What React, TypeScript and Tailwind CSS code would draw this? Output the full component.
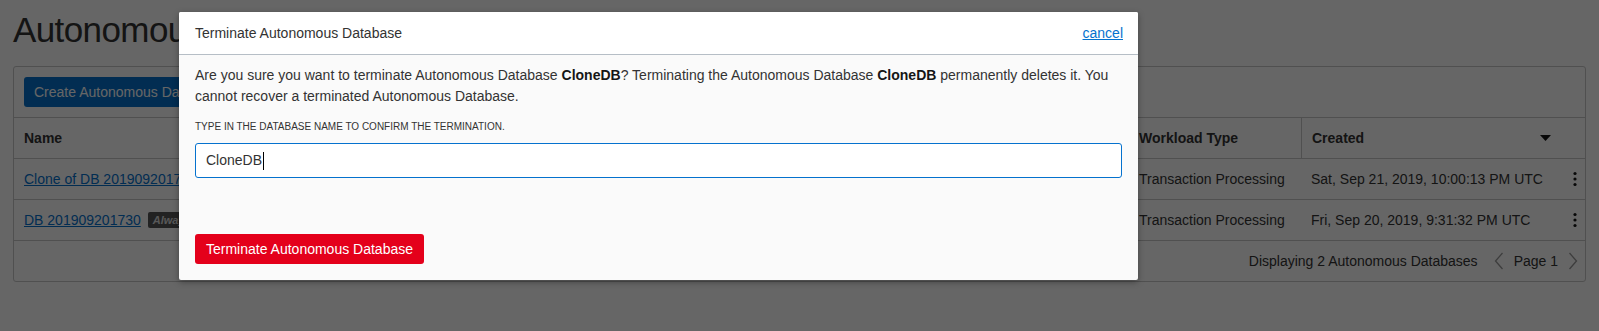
const rows = [
  {
    name: 'Clone of DB 201909201730',
    free: false,
    workload: 'Transaction Processing',
    created: 'Sat, Sep 21, 2019, 10:00:13 PM UTC',
  },
  {
    name: 'DB 201909201730',
    free: true,
    workload: 'Transaction Processing',
    created: 'Fri, Sep 20, 2019, 9:31:32 PM UTC',
  },
];

function Kebab() {
  return (
    <svg width="4" height="16" viewBox="0 0 4 16" className="fill-[#161616]">
      <circle cx="2" cy="2.5" r="1.6" />
      <circle cx="2" cy="8" r="1.6" />
      <circle cx="2" cy="13.5" r="1.6" />
    </svg>
  );
}

function Chevron({ dir }: { dir: 'left' | 'right' }) {
  return (
    <svg width="10" height="18" viewBox="0 0 10 18" fill="none" className="stroke-[#9a9a9a]">
      {dir === 'left' ? <path d="M8.5 1 L1.5 9 L8.5 17" strokeWidth="1.3" /> : <path d="M1.5 1 L8.5 9 L1.5 17" strokeWidth="1.3" />}
    </svg>
  );
}

export default function App() {
  return (
    <div className="relative h-[331px] w-full overflow-hidden bg-white font-['Liberation_Sans',Arial,sans-serif] text-[14px] text-[#333]">
      {/* page behind the dialog */}
      <div className="px-[13px] pt-[8px]">
        <h1 className="text-[35px] leading-[44px] tracking-[-0.6px] text-[#333]">Autonomous Databases</h1>

        <div className="mt-[14px] rounded-[3px] border border-[#c8c8c8]">
          <div className="border-b border-[#c8c8c8] px-[10px] py-[10px]">
            <button className="h-[30px] rounded-[3px] bg-[#0572ce] px-[10px] text-[14px] text-white">
              Create Autonomous Database
            </button>
          </div>

          <div className="grid h-[41px] grid-cols-[1fr_172px_264px_20px] items-center border-b border-[#c8c8c8] font-bold text-[#333]">
            <div className="pl-[10px]">Name</div>
            <div className="pl-[10px]">Workload Type</div>
            <div className="col-span-2 flex h-full items-center justify-between border-l border-[#c8c8c8] pl-[10px] pr-[34px]">
              <span>Created</span>
              <svg width="11" height="6" viewBox="0 0 11 6" className="fill-[#161616]">
                <path d="M0 0 H11 L5.5 6 Z" />
              </svg>
            </div>
          </div>

          {rows.map((r) => (
            <div
              key={r.name}
              className="grid h-[41px] grid-cols-[1fr_172px_264px_20px] items-center border-b border-[#c8c8c8]"
            >
              <div className="flex items-center gap-[7px] pl-[10px]">
                <a className="text-[#0572ce] underline">{r.name}</a>
                {r.free && (
                  <span className="rounded-[2px] bg-[#555] px-[5px] text-[11px] leading-[16px] font-bold italic text-[#ddd]">
                    Always Free
                  </span>
                )}
              </div>
              <div className="pl-[10px] whitespace-nowrap">{r.workload}</div>
              <div className="pl-[10px] whitespace-nowrap">{r.created}</div>
              <div className="flex justify-center">
                <Kebab />
              </div>
            </div>
          ))}

          <div className="flex h-[40px] items-center justify-end gap-[16px] pr-[7px]">
            <span>Displaying 2 Autonomous Databases</span>
            <div className="flex items-center gap-[10px]">
              <Chevron dir="left" />
              <span>Page 1</span>
              <Chevron dir="right" />
            </div>
          </div>
        </div>
      </div>

      {/* dim overlay */}
      <div className="absolute inset-0 bg-black/60" />

      {/* terminate dialog */}
      <div className="absolute left-[179px] top-[12px] w-[959px] overflow-hidden rounded-[2px] bg-[#fafafa] shadow-[0_2px_6px_rgba(0,0,0,0.35)]">
        <div className="flex h-[43px] items-center justify-between border-b border-[#b6bec6] bg-white pl-[16px] pr-[15px]">
          <span className="text-[#333]">Terminate Autonomous Database</span>
          <a className="text-[#0572ce] underline">cancel</a>
        </div>

        <div className="px-[16px] pb-[16px] pt-[10px]">
          <p className="leading-[21px] text-[#333]">
            Are you sure you want to terminate Autonomous Database <b className="text-[#161616]">CloneDB</b>? Terminating
            the Autonomous Database <b className="text-[#161616]">CloneDB</b> permanently deletes it. You cannot recover a
            terminated Autonomous Database.
          </p>

          <div className="mt-[13px] text-[10px] leading-[14px] uppercase text-[#333]">
            Type in the database name to confirm the termination.
          </div>

          <div className="mt-[9px] flex h-[35px] items-center rounded-[3px] border border-[#0572ce] bg-white pl-[10px] text-[#333]">
            <span>CloneDB</span>
            <span className="ml-px h-[18px] w-px bg-black" />
          </div>

          <button className="mt-[56px] h-[30px] rounded-[3px] bg-[#e4001b] px-[11px] text-[14px] text-white">
            Terminate Autonomous Database
          </button>
        </div>
      </div>
    </div>
  );
}
